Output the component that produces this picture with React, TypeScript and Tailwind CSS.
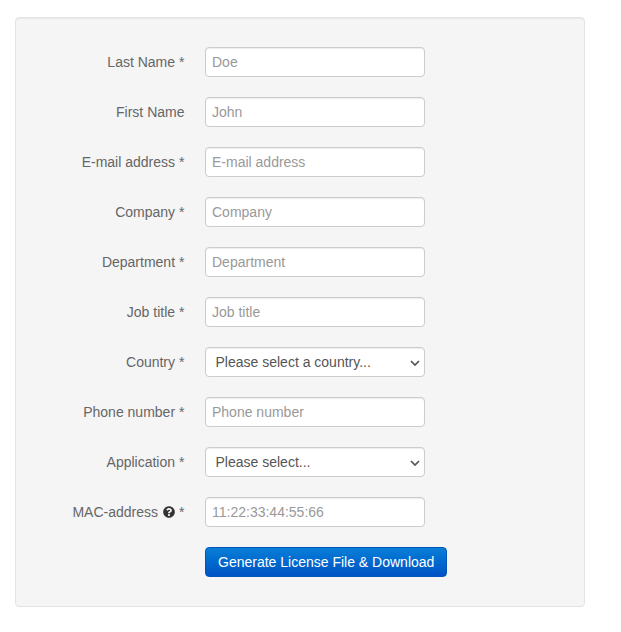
import React from 'react';
import { FaQuestionCircle } from 'react-icons/fa';

type Field = {
  label: string;
  required: boolean;
  placeholder?: string;
  options?: string;
  help?: boolean;
};

const fields: Field[] = [
  { label: 'Last Name', required: true, placeholder: 'Doe' },
  { label: 'First Name', required: false, placeholder: 'John' },
  { label: 'E-mail address', required: true, placeholder: 'E-mail address' },
  { label: 'Company', required: true, placeholder: 'Company' },
  { label: 'Department', required: true, placeholder: 'Department' },
  { label: 'Job title', required: true, placeholder: 'Job title' },
  { label: 'Country', required: true, options: 'Please select a country...' },
  { label: 'Phone number', required: true, placeholder: 'Phone number' },
  { label: 'Application', required: true, options: 'Please select...' },
  { label: 'MAC-address', required: true, placeholder: '11:22:33:44:55:66', help: true },
];

const App: React.FC = () => {
  return (
    <div className="min-h-[632px] bg-white pl-[15px] pt-[17px] font-['Liberation_Sans',Arial,sans-serif] text-[14px] leading-[20px] text-[#666]">
      <form className="flex w-[570px] flex-col gap-5 rounded border border-[#e3e3e3] bg-[#f5f5f5] py-[29px] shadow-[inset_0_1px_1px_rgba(0,0,0,0.05)]">
        {fields.map((field) => (
          <div key={field.label} className="flex h-[30px] items-center">
            <label className="flex w-[168.5px] items-center justify-end">
              {field.label}
              {field.help && <FaQuestionCircle className="ml-[5px] text-[12px] text-[#333]" />}
              {field.required && <span className="ml-[4px]">*</span>}
            </label>
            {field.options ? (
              <div className="relative ml-[20.5px] h-[30px] w-[220px]">
                <select className="h-[30px] w-full appearance-none rounded border border-[#ccc] bg-white pl-[9.5px] pr-6 text-[#555] shadow-[inset_0_1px_1px_rgba(0,0,0,0.075)]">
                  <option>{field.options}</option>
                </select>
                <svg
                  viewBox="0 0 10 6"
                  className="pointer-events-none absolute right-[5px] top-[13px] h-[6px] w-[10px]"
                  fill="none"
                  stroke="#555"
                  strokeWidth="1.75"
                >
                  <path d="M1 1l4 4 4-4" />
                </svg>
              </div>
            ) : (
              <input
                type="text"
                placeholder={field.placeholder}
                className="ml-[20.5px] h-[30px] w-[220px] rounded border border-[#ccc] bg-white px-[6px] shadow-[inset_0_1px_1px_rgba(0,0,0,0.075)] placeholder:text-[#999]"
              />
            )}
          </div>
        ))}
        <div className="flex h-[30px] pl-[189px]">
          <button
            type="button"
            className="h-[30px] rounded border border-[#0056b8] bg-gradient-to-b from-[#0b7ed8] to-[#0052c4] px-3 text-white"
          >
            Generate License File &amp; Download
          </button>
        </div>
      </form>
    </div>
  );
};

export default App;
